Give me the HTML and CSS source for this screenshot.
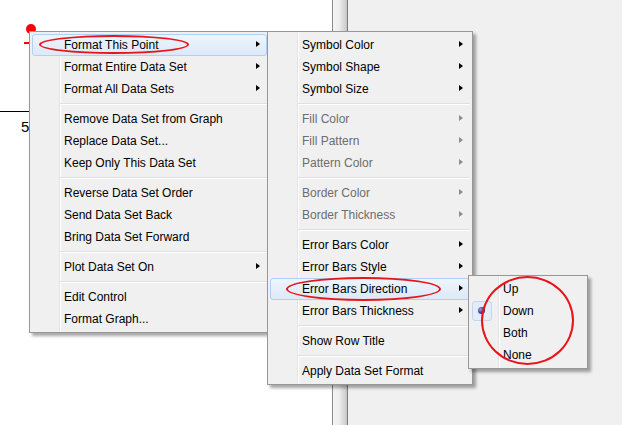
FILE: index.html
```html
<!DOCTYPE html>
<html lang="en">
<head>
    <meta charset="UTF-8">
    <title>Format This Point</title>
    <link rel="stylesheet" href="styles.css">
</head>
<body>
    <div class="screen">
        <div class="plot">
            <span class="point"></span>
            <span class="cap"></span>
            <span class="axis"></span>
            <span class="tick-label">5</span>
        </div>
        <div class="splitter"></div>
        <div class="panel"></div>
    </div>

    <div class="menu menu-main">
        <div class="item active sub">Format This Point</div>
        <div class="item sub">Format Entire Data Set</div>
        <div class="item sub">Format All Data Sets</div>
        <div class="sep"></div>
        <div class="item">Remove Data Set from Graph</div>
        <div class="item">Replace Data Set...</div>
        <div class="item">Keep Only This Data Set</div>
        <div class="sep"></div>
        <div class="item">Reverse Data Set Order</div>
        <div class="item">Send Data Set Back</div>
        <div class="item">Bring Data Set Forward</div>
        <div class="sep"></div>
        <div class="item sub">Plot Data Set On</div>
        <div class="sep"></div>
        <div class="item">Edit Control</div>
        <div class="item">Format Graph...</div>
    </div>

    <div class="menu menu-format">
        <div class="item sub">Symbol Color</div>
        <div class="item sub">Symbol Shape</div>
        <div class="item sub">Symbol Size</div>
        <div class="sep"></div>
        <div class="item sub disabled">Fill Color</div>
        <div class="item sub disabled">Fill Pattern</div>
        <div class="item sub disabled">Pattern Color</div>
        <div class="sep"></div>
        <div class="item sub disabled">Border Color</div>
        <div class="item sub disabled">Border Thickness</div>
        <div class="sep"></div>
        <div class="item sub">Error Bars Color</div>
        <div class="item sub">Error Bars Style</div>
        <div class="item sub active">Error Bars Direction</div>
        <div class="item sub">Error Bars Thickness</div>
        <div class="sep"></div>
        <div class="item">Show Row Title</div>
        <div class="sep"></div>
        <div class="item">Apply Data Set Format</div>
    </div>

    <div class="menu menu-direction">
        <div class="item">Up</div>
        <div class="item"><span class="radio"></span>Down</div>
        <div class="item">Both</div>
        <div class="item">None</div>
    </div>

    <div class="mark mark-point"></div>
    <div class="mark mark-direction"></div>
    <div class="mark mark-options"></div>
</body>
</html>
```

FILE: styles.css
```css
html, body {
    margin: 0;
    padding: 0;
    width: 622px;
    height: 425px;
    overflow: hidden;
    font-family: "Liberation Sans", Arial, sans-serif;
}
.screen {
    display: flex;
    height: 425px;
}
.plot {
    width: 332px;
    background: #fff;
    position: relative;
}
.point {
    position: absolute;
    left: 26px;
    top: 24px;
    width: 10px;
    height: 10px;
    border-radius: 50%;
    background: #f00;
}
.cap {
    position: absolute;
    left: 24px;
    top: 42px;
    width: 6px;
    height: 2px;
    background: #f00;
}
.axis {
    position: absolute;
    left: 0;
    top: 111px;
    width: 30px;
    height: 1px;
    background: #000;
}
.tick-label {
    position: absolute;
    left: 21px;
    top: 118px;
    font-size: 15px;
    color: #000;
}
.splitter {
    width: 16px;
    box-sizing: border-box;
    border-left: 1px solid #8a8a8a;
    border-right: 1px solid #7c7c7c;
    background: linear-gradient(to right, #f4f4f4 0, #eeeeee 6px, #d2d2d2 12px, #c4c4c4 14px);
    box-shadow: 1px 0 0 #fafafa;
}
.panel {
    flex: 1;
    background: #f0f0f0;
}

.menu {
    position: absolute;
    box-sizing: border-box;
    border: 1px solid #979797;
    padding: 2px;
    background: linear-gradient(to right, #f0f0f0 29px, #e2e3e3 29px, #e2e3e3 30px, #fff 30px, #fff 31px, #f0f0f0 31px);
    box-shadow: 3px 3px 3px rgba(0, 0, 0, 0.35);
    font-size: 12px;
    color: #000;
}
.menu-main {
    left: 29px;
    top: 31px;
    width: 241px;
    z-index: 1;
}
.menu-format {
    left: 267px;
    top: 31px;
    width: 206px;
    z-index: 2;
}
.menu-direction {
    left: 468px;
    top: 275px;
    width: 120px;
    z-index: 3;
}
.item {
    position: relative;
    box-sizing: border-box;
    height: 22px;
    line-height: 20px;
    padding-left: 31px;
    border: 1px solid transparent;
    border-radius: 3px;
    white-space: nowrap;
}
.item.active {
    border-color: #aed0f2;
    background: linear-gradient(#eef5fc, #dce9f7);
}
.item.disabled {
    color: #6d6d6d;
}
.sub::after {
    content: "";
    position: absolute;
    right: 6px;
    top: 6px;
    border-left: 4px solid #000;
    border-top: 3.5px solid transparent;
    border-bottom: 3.5px solid transparent;
}
.disabled::after {
    border-left-color: #8d8d8d;
}
.sep {
    height: 8px;
    margin-left: 28px;
    position: relative;
}
.sep::before {
    content: "";
    position: absolute;
    left: 0;
    right: 0;
    top: 3px;
    border-top: 1px solid #e0e0e0;
    border-bottom: 1px solid #fff;
}
.radio {
    position: absolute;
    left: 0;
    top: 0;
    width: 20px;
    height: 20px;
    box-sizing: border-box;
    border: 1px solid #c2d6ec;
    border-radius: 3px;
    background: #e4edf7;
}
.radio::after {
    content: "";
    position: absolute;
    left: 5px;
    top: 5px;
    width: 7px;
    height: 7px;
    border-radius: 50%;
    background: radial-gradient(circle at 35% 35%, #9a9ae0 0, #3a3a9a 55%, #202070 100%);
}

.mark {
    position: absolute;
    box-sizing: border-box;
    border: 2px solid #e8141c;
    border-radius: 50%;
    z-index: 4;
}
.mark-point {
    left: 39px;
    top: 35px;
    width: 150px;
    height: 19px;
}
.mark-direction {
    left: 286px;
    top: 277px;
    width: 155px;
    height: 24px;
}
.mark-options {
    left: 481px;
    top: 276px;
    width: 93px;
    height: 89px;
}
```
